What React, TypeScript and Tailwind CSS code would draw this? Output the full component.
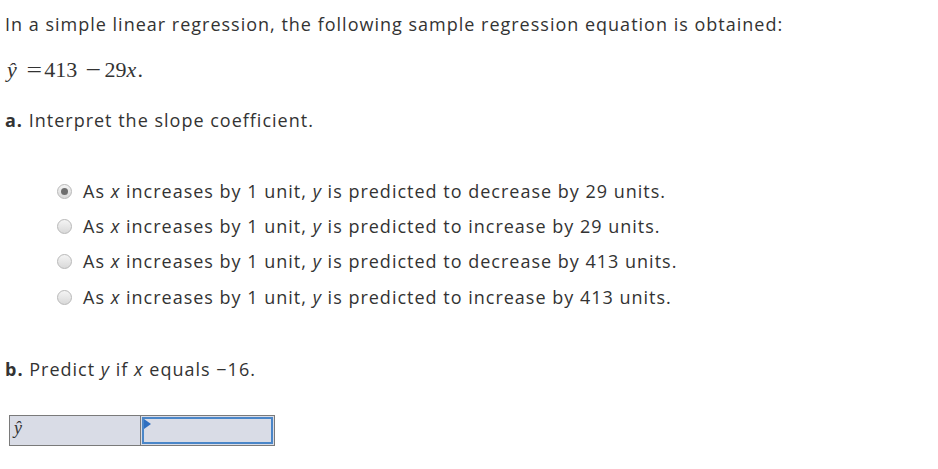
import React from 'react';

const options = [
  { text: 'decrease by 29 units.', checked: true },
  { text: 'increase by 29 units.', checked: false },
  { text: 'decrease by 413 units.', checked: false },
  { text: 'increase by 413 units.', checked: false },
];

function Radio({ checked }: { checked: boolean }) {
  return (
    <span className="relative inline-flex h-[15px] w-[15px] shrink-0 items-center justify-center rounded-full border border-[#b8b8b8] bg-gradient-to-b from-[#f4f4f4] to-[#d9d9d9]">
      {checked && <span className="h-[7px] w-[7px] rounded-full bg-[#6e6e6e]" />}
    </span>
  );
}

export default function App() {
  return (
    <div className="h-[469px] w-[938px] bg-white text-[#333] text-[18px] tracking-[1px] font-['Open_Sans',sans-serif]">
      <div className="px-[5px] pt-[12px]">
        <p className="leading-[24px]">
          In a simple linear regression, the following sample regression equation is obtained:
        </p>
        <p className="mt-[21px] flex items-baseline pl-[2px] font-['Liberation_Serif',serif] text-[22px] leading-[26px] tracking-normal">
          <span className="italic">ŷ</span>
          <span className="ml-[11px] inline-block scale-x-125">=</span>
          <span className="ml-[4px]">413</span>
          <span className="ml-[10px] inline-block scale-x-125">−</span>
          <span className="ml-[5px]">29</span>
          <span className="italic">x</span>
          <span className="ml-[1px]">.</span>
        </p>
        <p className="mt-[25px] leading-[24px]">
          <span className="font-bold">a.</span> Interpret the slope coefficient.
        </p>
        <div className="mt-[47px] flex flex-col gap-[11px] pl-[52px]">
          {options.map((o, i) => (
            <label key={i} className="flex h-[24.3px] items-center gap-[11px]">
              <Radio checked={o.checked} />
              <span>
                As <span className="italic">x</span> increases by 1 unit, <span className="italic">y</span> is
                predicted to {o.text}
              </span>
            </label>
          ))}
        </div>
        <p className="mt-[48px] leading-[24px]">
          <span className="font-bold">b.</span> Predict <span className="italic">y</span> if{' '}
          <span className="italic">x</span> equals −16.
        </p>
        <div className="ml-[4px] mt-[34px] flex h-[31px] w-[266px] border border-[#7a7a7a] bg-[#d9dce6] tracking-normal">
          <div className="flex w-[131px] items-start border-r border-[#7a7a7a] px-[4px] pt-[1px] font-['Liberation_Serif',serif] text-[18px] italic leading-[22px]">
            ŷ
          </div>
          <div className="relative m-[1px] flex-1 border-2 border-[#4a86c8]">
            <span className="absolute left-0 top-0 h-0 w-0 border-y-[5px] border-l-[7px] border-y-transparent border-l-[#2f6fc0]" />
          </div>
        </div>
      </div>
    </div>
  );
}
